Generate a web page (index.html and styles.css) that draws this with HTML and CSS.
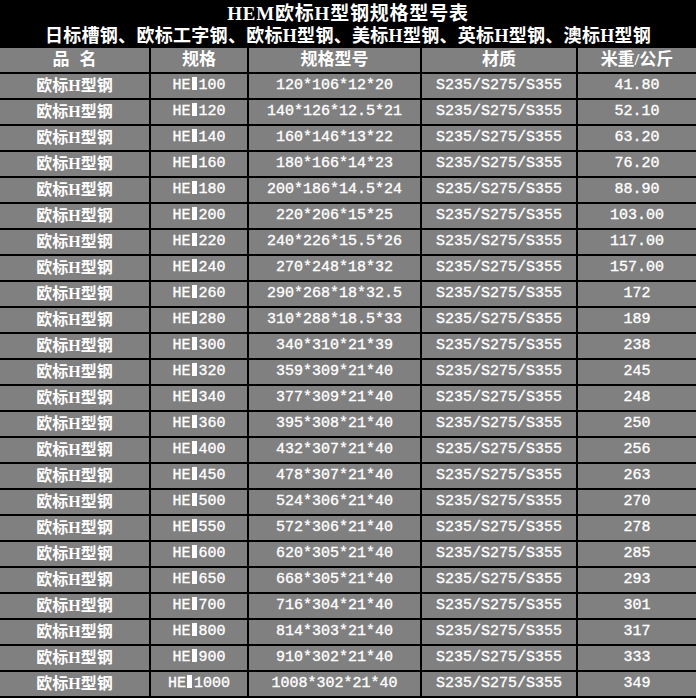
FILE: index.html
```html
<!DOCTYPE html>
<html lang="zh-CN">
<head>
<meta charset="utf-8">
<title>HEM欧标H型钢规格型号表</title>
<link rel="stylesheet" href="styles.css">
</head>
<body>
<div class="page">
  <header class="head">
    <h1 class="title">HEM欧标H型钢规格型号表</h1>
    <p class="subtitle">日标槽钢、欧标工字钢、欧标H型钢、美标H型钢、英标H型钢、澳标H型钢</p>
  </header>
  <table class="spec">
    <colgroup>
      <col class="c1"><col class="c2"><col class="c3"><col class="c4"><col class="c5">
    </colgroup>
    <thead>
      <tr><th class="wide">品 名</th><th>规格</th><th>规格型号</th><th>材质</th><th>米重/公斤</th></tr>
    </thead>
    <tbody>
      <tr><td class="name">欧标H型钢</td><td>HE<span class="blk">▮</span>100</td><td>120*106*12*20</td><td>S235/S275/S355</td><td>41.80</td></tr>
      <tr><td class="name">欧标H型钢</td><td>HE<span class="blk">▮</span>120</td><td>140*126*12.5*21</td><td>S235/S275/S355</td><td>52.10</td></tr>
      <tr><td class="name">欧标H型钢</td><td>HE<span class="blk">▮</span>140</td><td>160*146*13*22</td><td>S235/S275/S355</td><td>63.20</td></tr>
      <tr><td class="name">欧标H型钢</td><td>HE<span class="blk">▮</span>160</td><td>180*166*14*23</td><td>S235/S275/S355</td><td>76.20</td></tr>
      <tr><td class="name">欧标H型钢</td><td>HE<span class="blk">▮</span>180</td><td>200*186*14.5*24</td><td>S235/S275/S355</td><td>88.90</td></tr>
      <tr><td class="name">欧标H型钢</td><td>HE<span class="blk">▮</span>200</td><td>220*206*15*25</td><td>S235/S275/S355</td><td>103.00</td></tr>
      <tr><td class="name">欧标H型钢</td><td>HE<span class="blk">▮</span>220</td><td>240*226*15.5*26</td><td>S235/S275/S355</td><td>117.00</td></tr>
      <tr><td class="name">欧标H型钢</td><td>HE<span class="blk">▮</span>240</td><td>270*248*18*32</td><td>S235/S275/S355</td><td>157.00</td></tr>
      <tr><td class="name">欧标H型钢</td><td>HE<span class="blk">▮</span>260</td><td>290*268*18*32.5</td><td>S235/S275/S355</td><td>172</td></tr>
      <tr><td class="name">欧标H型钢</td><td>HE<span class="blk">▮</span>280</td><td>310*288*18.5*33</td><td>S235/S275/S355</td><td>189</td></tr>
      <tr><td class="name">欧标H型钢</td><td>HE<span class="blk">▮</span>300</td><td>340*310*21*39</td><td>S235/S275/S355</td><td>238</td></tr>
      <tr><td class="name">欧标H型钢</td><td>HE<span class="blk">▮</span>320</td><td>359*309*21*40</td><td>S235/S275/S355</td><td>245</td></tr>
      <tr><td class="name">欧标H型钢</td><td>HE<span class="blk">▮</span>340</td><td>377*309*21*40</td><td>S235/S275/S355</td><td>248</td></tr>
      <tr><td class="name">欧标H型钢</td><td>HE<span class="blk">▮</span>360</td><td>395*308*21*40</td><td>S235/S275/S355</td><td>250</td></tr>
      <tr><td class="name">欧标H型钢</td><td>HE<span class="blk">▮</span>400</td><td>432*307*21*40</td><td>S235/S275/S355</td><td>256</td></tr>
      <tr><td class="name">欧标H型钢</td><td>HE<span class="blk">▮</span>450</td><td>478*307*21*40</td><td>S235/S275/S355</td><td>263</td></tr>
      <tr><td class="name">欧标H型钢</td><td>HE<span class="blk">▮</span>500</td><td>524*306*21*40</td><td>S235/S275/S355</td><td>270</td></tr>
      <tr><td class="name">欧标H型钢</td><td>HE<span class="blk">▮</span>550</td><td>572*306*21*40</td><td>S235/S275/S355</td><td>278</td></tr>
      <tr><td class="name">欧标H型钢</td><td>HE<span class="blk">▮</span>600</td><td>620*305*21*40</td><td>S235/S275/S355</td><td>285</td></tr>
      <tr><td class="name">欧标H型钢</td><td>HE<span class="blk">▮</span>650</td><td>668*305*21*40</td><td>S235/S275/S355</td><td>293</td></tr>
      <tr><td class="name">欧标H型钢</td><td>HE<span class="blk">▮</span>700</td><td>716*304*21*40</td><td>S235/S275/S355</td><td>301</td></tr>
      <tr><td class="name">欧标H型钢</td><td>HE<span class="blk">▮</span>800</td><td>814*303*21*40</td><td>S235/S275/S355</td><td>317</td></tr>
      <tr><td class="name">欧标H型钢</td><td>HE<span class="blk">▮</span>900</td><td>910*302*21*40</td><td>S235/S275/S355</td><td>333</td></tr>
      <tr><td class="name">欧标H型钢</td><td>HE<span class="blk">▮</span>1000</td><td>1008*302*21*40</td><td>S235/S275/S355</td><td>349</td></tr>
    </tbody>
  </table>
</div>
</body>
</html>
```
FILE: styles.css
```css
html, body {
  margin: 0;
  padding: 0;
  background: #000;
}
.page {
  width: 696px;
  height: 698px;
  overflow: hidden;
  background: #000;
}
.head {
  height: 48px;
  display: flex;
  flex-direction: column;
  align-items: center;
  color: #fff;
  font-family: "Liberation Serif", "Noto Sans CJK SC", serif;
  font-weight: bold;
}
.title {
  margin: 0;
  height: 25px;
  font-size: 19px;
  line-height: 27px;
  font-weight: bold;
  letter-spacing: 0.8px;
}
.subtitle {
  margin: 0;
  height: 23px;
  font-size: 18px;
  line-height: 22px;
  letter-spacing: 0.3px;
  font-weight: 600;
}
.spec {
  width: 696px;
  table-layout: fixed;
  border-collapse: separate;
  border-spacing: 0;
  background: #808080;
  color: #fff;
}
.c1 { width: 151px; }
.c2 { width: 98px; }
.c3 { width: 173px; }
.c4 { width: 156px; }
.c5 { width: 118px; }
.spec th, .spec td {
  height: 26px;
  box-sizing: border-box;
  padding: 0;
  text-align: center;
  vertical-align: middle;
  border-right: 2px solid #000;
  border-bottom: 2px solid #000;
  white-space: nowrap;
  overflow: hidden;
}
.spec th:last-child, .spec td:last-child {
  border-right: none;
}
.spec th {
  font-family: "Liberation Serif", "Noto Sans CJK SC", serif;
  font-size: 17px;
  font-weight: bold;
  line-height: 22px;
}
.spec th.wide {
  word-spacing: 6px;
}
.spec td {
  font-family: "Liberation Mono", "Noto Sans CJK SC", monospace;
  font-size: 15px;
  line-height: 22px;
  -webkit-text-stroke: 0.35px #fff;
}
.spec td.name {
  font-family: "Liberation Serif", "Noto Sans CJK SC", serif;
  font-size: 16px;
  font-weight: bold;
  -webkit-text-stroke: 0;
}
.blk {
  display: inline-block;
  width: 5px;
  height: 13px;
  background: #fff;
  color: transparent;
  overflow: hidden;
  vertical-align: -1px;
  margin: 0 2px 0 1px;
  font-size: 1px;
}
```
